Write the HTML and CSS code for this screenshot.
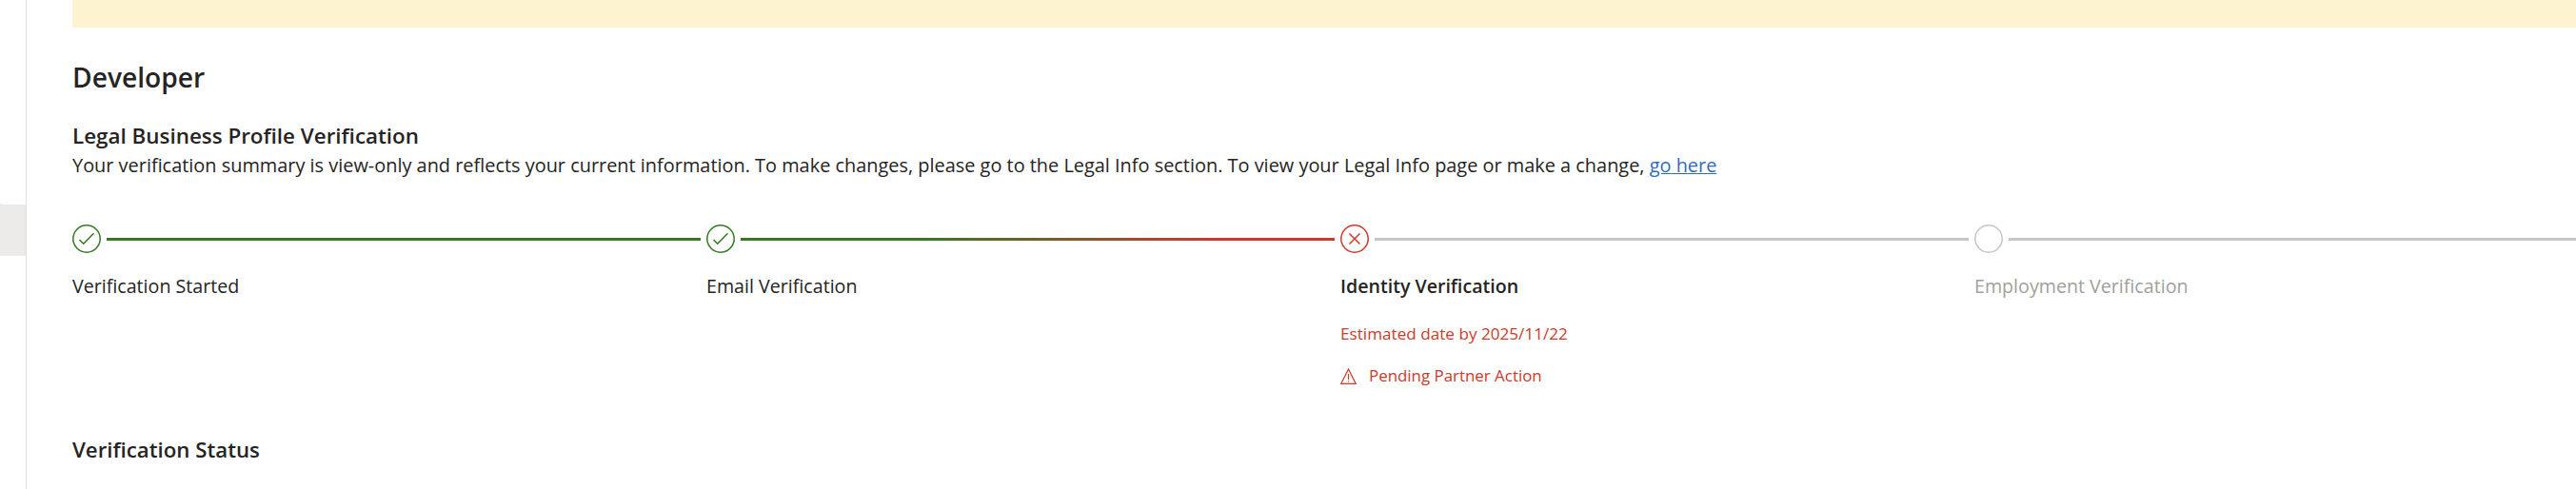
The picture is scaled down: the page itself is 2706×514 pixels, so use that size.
FILE: index.html
```html
<!DOCTYPE html>
<html lang="en">
<head>
<meta charset="utf-8">
<title>Developer</title>
<link rel="stylesheet" href="styles.css">
</head>
<body>
<div class="page">
  <nav class="rail">
    <div class="rail-tick"></div>
    <div class="rail-item"></div>
  </nav>
  <main class="main">
    <div class="banner"></div>
    <h1 class="title">Developer</h1>
    <h2 class="subtitle">Legal Business Profile Verification</h2>
    <p class="intro">Your verification summary is view-only and reflects your current information. To make changes, please go to the Legal Info section. To view your Legal Info page or make a change, <a class="link" href="#">go here</a></p>
    <ol class="stepper">
      <li class="step">
        <div class="step-head">
          <svg class="step-icon done" viewBox="0 0 30 30"><circle cx="15" cy="15" r="14.2"/><path d="M7.5 16l4.2 4.3L22.5 9.2"/></svg>
          <span class="step-line line-done"></span>
        </div>
        <div class="step-label">Verification Started</div>
      </li>
      <li class="step">
        <div class="step-head">
          <svg class="step-icon done" viewBox="0 0 30 30"><circle cx="15" cy="15" r="14.2"/><path d="M7.5 16l4.2 4.3L22.5 9.2"/></svg>
          <span class="step-line line-fail"></span>
        </div>
        <div class="step-label">Email Verification</div>
      </li>
      <li class="step">
        <div class="step-head">
          <svg class="step-icon failed" viewBox="0 0 30 30"><circle cx="15" cy="15" r="14.2"/><path d="M9.5 9.5l11 11M20.5 9.5l-11 11"/></svg>
          <span class="step-line line-todo"></span>
        </div>
        <div class="step-label step-label-current">Identity Verification</div>
        <div class="step-date">Estimated date by 2025/11/22</div>
        <div class="step-alert">
          <svg class="alert-icon" viewBox="0 0 17 17"><path d="M8.5 1L16.2 16.3H.8z"/><path d="M8.5 6v6M8.5 13.2v1.4"/></svg>
          <span>Pending Partner Action</span>
        </div>
      </li>
      <li class="step">
        <div class="step-head">
          <svg class="step-icon todo" viewBox="0 0 30 30"><circle cx="15" cy="15" r="14.2"/></svg>
          <span class="step-line line-todo"></span>
        </div>
        <div class="step-label step-label-todo">Employment Verification</div>
      </li>
    </ol>
    <h2 class="subtitle status-title">Verification Status</h2>
  </main>
</div>
</body>
</html>
```
FILE: styles.css
```css
* { box-sizing: border-box; }
html, body { margin: 0; padding: 0; background: #fff; }
body {
  font-family: "Open Sans", "Noto Sans", sans-serif;
  color: #252423;
}
.page {
  display: flex;
  width: 2706px;
  height: 514px;
  overflow: hidden;
}
.rail {
  flex: 0 0 28px;
  border-right: 1px solid #e1dfdd;
}
.rail-tick {
  width: 3px;
  height: 1px;
  margin-top: 214px;
  background: #f3f2f1;
}
.rail-item {
  height: 54px;
  background: #edebe9;
}
.main {
  flex: 1;
  min-width: 0;
  padding-left: 48px;
}
.banner {
  height: 29px;
  background: #fdf3d0;
}
.title {
  margin: 33px 0 0;
  font-size: 28.2px;
  line-height: 38px;
  font-weight: 600;
}
.subtitle {
  margin: 28px 0 0;
  font-size: 22.4px;
  line-height: 30px;
  font-weight: 600;
}
.intro {
  margin: 2px 0 0;
  font-size: 19.92px;
  line-height: 28px;
  white-space: nowrap;
}
.link { color: #2f6cc0; }
.stepper {
  display: grid;
  grid-template-columns: repeat(4, 666px);
  margin: 48px 0 0;
  padding: 0;
  list-style: none;
}
.step-head {
  display: flex;
  align-items: center;
  gap: 6px;
  height: 30px;
  padding-right: 6px;
}
.step-icon {
  flex: 0 0 30px;
  width: 30px;
  height: 30px;
  fill: none;
  stroke-width: 1.5;
}
.done { stroke: #36791f; }
.failed { stroke: #cc3a2b; }
.todo { stroke: #c8c6c4; }
.step-line {
  flex: 1;
  height: 3px;
}
.line-done { background: #36791f; }
.line-fail { background: linear-gradient(to right, #36791f 30%, #cf3a28 80%); }
.line-todo { background: #c8c6c4; }
.step-label {
  margin-top: 22px;
  font-size: 19.65px;
  line-height: 26px;
  white-space: nowrap;
}
.step-label-current { font-size: 19.6px; font-weight: 600; }
.step-label-todo { color: #a19f9d; }
.step-date {
  margin-top: 25px;
  font-size: 17.15px;
  line-height: 24px;
  color: #cc3a2b;
}
.step-alert {
  display: flex;
  align-items: center;
  gap: 13px;
  margin-top: 20px;
  font-size: 16.9px;
  line-height: 24px;
  color: #cc3a2b;
}
.alert-icon {
  flex: 0 0 17px;
  width: 17px;
  height: 17px;
  fill: none;
  stroke: #cc3a2b;
  stroke-width: 1.2;
}
.status-title { margin-top: 51px; font-size: 22.25px; }
```
